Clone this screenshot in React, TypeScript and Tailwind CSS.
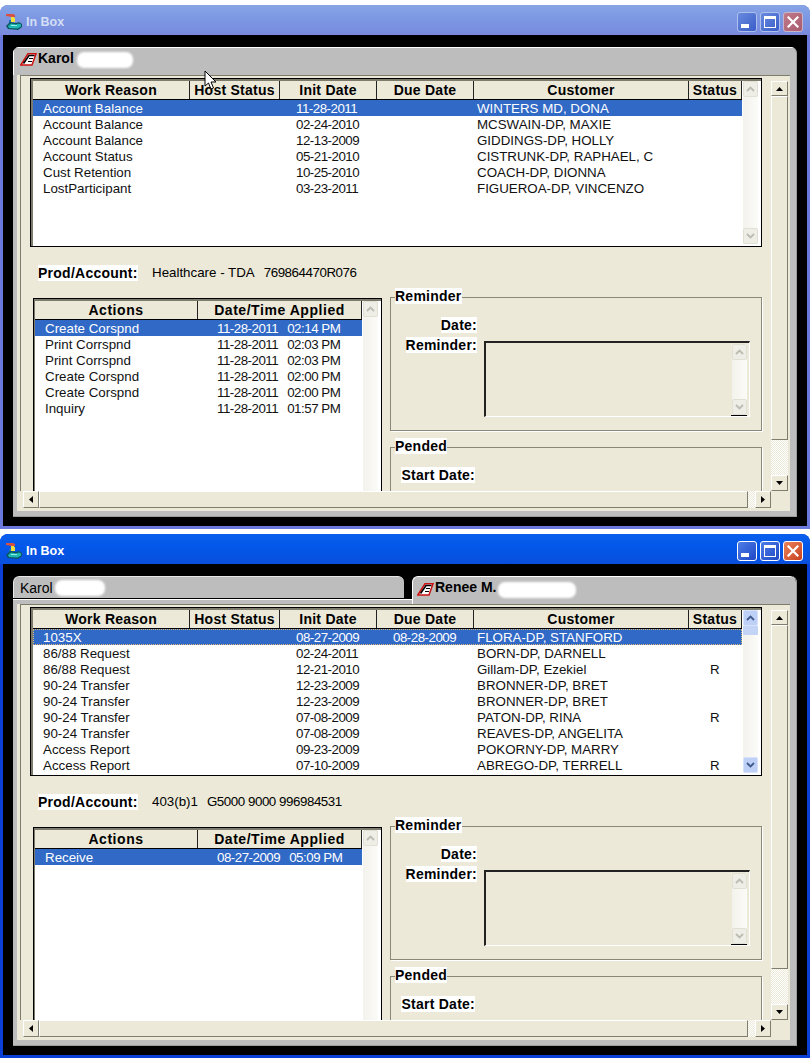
import type { ReactNode } from "react";

type WorkRow = [string, string, string, string, string];
type ActionRow = [string, string, string];

const karolRows: WorkRow[] = [
  ["Account Balance", "11-28-2011", "", "WINTERS MD, DONA", ""],
  ["Account Balance", "02-24-2010", "", "MCSWAIN-DP, MAXIE", ""],
  ["Account Balance", "12-13-2009", "", "GIDDINGS-DP, HOLLY", ""],
  ["Account Status", "05-21-2010", "", "CISTRUNK-DP, RAPHAEL, C", ""],
  ["Cust Retention", "10-25-2010", "", "COACH-DP, DIONNA", ""],
  ["LostParticipant", "03-23-2011", "", "FIGUEROA-DP, VINCENZO", ""],
];

const reneeRows: WorkRow[] = [
  ["1035X", "08-27-2009", "08-28-2009", "FLORA-DP, STANFORD", ""],
  ["86/88 Request", "02-24-2011", "", "BORN-DP, DARNELL", ""],
  ["86/88 Request", "12-21-2010", "", "Gillam-DP, Ezekiel", "R"],
  ["90-24 Transfer", "12-23-2009", "", "BRONNER-DP, BRET", ""],
  ["90-24 Transfer", "12-23-2009", "", "BRONNER-DP, BRET", ""],
  ["90-24 Transfer", "07-08-2009", "", "PATON-DP, RINA", "R"],
  ["90-24 Transfer", "07-08-2009", "", "REAVES-DP, ANGELITA", ""],
  ["Access Report", "09-23-2009", "", "POKORNY-DP, MARRY", ""],
  ["Access Report", "07-10-2009", "", "ABREGO-DP, TERRELL", "R"],
];

const karolActions: ActionRow[] = [
  ["Create Corspnd", "11-28-2011", "02:14 PM"],
  ["Print Corrspnd", "11-28-2011", "02:03 PM"],
  ["Print Corrspnd", "11-28-2011", "02:03 PM"],
  ["Create Corspnd", "11-28-2011", "02:00 PM"],
  ["Create Corspnd", "11-28-2011", "02:00 PM"],
  ["Inquiry", "11-28-2011", "01:57 PM"],
];

const reneeActions: ActionRow[] = [["Receive", "08-27-2009", "05:09 PM"]];

const workHeads = ["Work Reason", "Host Status", "Init Date", "Due Date", "Customer", "Status"];

const AppIcon = () => (
  <svg width="17" height="17" viewBox="0 0 17 17" className="shrink-0">
    <path d="M0 0h7l2 1v2H6L0 2z" fill="#d8503f" />
    <path d="M5 3h3v1h1v4H5z" fill="#f2e23a" />
    <path d="M3 6h2v3H3z" fill="#1c6fb8" />
    <polygon points="0,12 4,8 10,9 13,8 16,10 16,13 12,16 2,15" fill="#0b5560" />
    <polygon points="2,12 5,9.5 10,10.5 13,9.5 15,10.5 15,12.5 11.5,14.5 3,14" fill="#1fb8b4" />
    <rect x="5" y="11" width="6" height="1" fill="#8cf0e8" />
  </svg>
);

const TabIcon = () => (
  <svg width="17" height="13" viewBox="0 0 17 13" className="shrink-0">
    <polygon points="0.8,12 8,0.8 16,0.8 12,12" fill="#fff" stroke="#cc1010" strokeWidth="1.5" />
    <polyline points="3.5,10.5 9,2.5 14.5,2.5" fill="none" stroke="#000" strokeWidth="1.6" />
    <rect x="9" y="5" width="4" height="1" fill="#000" />
    <rect x="8" y="8" width="4" height="1" fill="#000" />
  </svg>
);

const Arrow = ({ dir }: { dir: "up" | "down" | "left" | "right" }) => {
  const points = {
    up: "0,4 3.5,0 7,4",
    down: "0,0 7,0 3.5,4",
    left: "4,0 4,7 0,3.5",
    right: "0,0 4,3.5 0,7",
  }[dir];
  const wide = dir === "up" || dir === "down";
  return (
    <svg width={wide ? 7 : 4} height={wide ? 4 : 7} viewBox={wide ? "0 0 7 4" : "0 0 4 7"}>
      <polygon points={points} fill="#000" />
    </svg>
  );
};

// classic grey scroll button, used by the outer form scrollbars
const ClassicButton = ({ dir, className }: { dir: "up" | "down" | "left" | "right"; className: string }) => (
  <div className={"flex shrink-0 items-center justify-center border border-t-white border-l-white border-r-[#7f7d6c] border-b-[#7f7d6c] bg-[#ece9d8] " + className}>
    <Arrow dir={dir} />
  </div>
);

const XpButton = ({ up, enabled }: { up: boolean; enabled: boolean }) => (
  <div
    className={
      enabled
        ? "flex h-[16px] w-[15px] shrink-0 items-center justify-center rounded-[2px] border border-[#d6e2fb] bg-[#bed0f6]"
        : "flex h-[16px] w-[15px] shrink-0 items-center justify-center rounded-[2px] border border-[#e2e0d4] bg-[#eeede6]"
    }
  >
    <svg width="9" height="6" viewBox="0 0 9 6">
      <polyline
        points={up ? "1,5 4.5,1.5 8,5" : "1,1 4.5,4.5 8,1"}
        fill="none"
        stroke={enabled ? "#3f5a8c" : "#bdbcb2"}
        strokeWidth="1.8"
      />
    </svg>
  </div>
);

const XpScroll = ({ enabled = false, className }: { enabled?: boolean; className: string }) => (
  <div className={"flex w-[15px] shrink-0 flex-col bg-linear-to-r from-[#f3f2ec] to-[#fbfbf8] " + className}>
    <XpButton up enabled={enabled} />
    {enabled && <div className="h-[9px] w-[15px] rounded-[1px] bg-[#c3d4f7]" />}
    <div className="flex-1" />
    <XpButton up={false} enabled={enabled} />
  </div>
);

const Cell = ({ children, className = "" }: { children?: ReactNode; className?: string }) => (
  <div className={"truncate leading-[18px] whitespace-pre " + className}>{children}</div>
);

const WorkTable = ({ rows, enabled, focus }: { rows: WorkRow[]; enabled: boolean; focus: boolean }) => (
  <div className="h-[169px] w-[732px] border border-black">
    <div className="flex h-[167px] border-t-2 border-l-2 border-[#7d7b6b] bg-white">
      <div className="w-[709px]">
        <div className="grid h-[19px] grid-cols-[157px_90px_97px_97px_215px_53px] border-b border-black bg-[#ece9d8]">
          {workHeads.map((head) => (
            <div key={head} className="flex items-center justify-center border-r border-[#222] text-[14px] leading-[18px] font-bold tracking-[0.25px]">
              {head}
            </div>
          ))}
        </div>
        {rows.map((row, i) => (
          <div
            key={i}
            className={
              i === 0
                ? focus
                  ? "grid h-[16px] grid-cols-[157px_90px_97px_97px_215px_53px] bg-[#3169c6] text-white outline-1 -outline-offset-1 outline-dotted outline-[#d9b878]"
                  : "grid h-[16px] grid-cols-[157px_90px_97px_97px_215px_53px] bg-[#3169c6] text-white"
                : "grid h-[16px] grid-cols-[157px_90px_97px_97px_215px_53px] text-[#111]"
            }
          >
            <Cell className="pl-[10px]">{row[0]}</Cell>
            <Cell />
            <Cell className="pl-[16px] tracking-[-0.5px]">{row[1]}</Cell>
            <Cell className="pl-[16px] tracking-[-0.5px]">{row[2]}</Cell>
            <Cell className="pl-[3px]">{row[3]}</Cell>
            <Cell className="pl-[21px]">{row[4]}</Cell>
          </div>
        ))}
      </div>
      <XpScroll enabled={enabled} className="ml-px h-[163px]" />
    </div>
  </div>
);

const ActionsTable = ({ rows }: { rows: ActionRow[] }) => (
  <div className="h-[220px] w-[349px] shrink-0 border border-black">
    <div className="flex h-full border-t-2 border-l border-[#7d7b6b] bg-white">
      <div className="w-[327px]">
        <div className="grid h-[19px] grid-cols-[163px_164px] border-b border-black bg-[#ece9d8]">
          {["Actions", "Date/Time Applied"].map((head) => (
            <div key={head} className="flex items-center justify-center border-r border-[#222] text-[14px] leading-[18px] font-bold tracking-[0.55px]">
              {head}
            </div>
          ))}
        </div>
        {rows.map((row, i) => (
          <div
            key={i}
            className={
              i === 0
                ? "grid h-[16px] grid-cols-[163px_164px] bg-[#3169c6] text-white"
                : "grid h-[16px] grid-cols-[163px_164px] text-[#111]"
            }
          >
            <Cell className="pl-[10px]">{row[0]}</Cell>
            <Cell className="pl-[19px] tracking-[-0.5px]">
              {row[1]}
              <span className="ml-[9px]">{row[2]}</span>
            </Cell>
          </div>
        ))}
      </div>
      <XpScroll className="ml-px h-[216px]" />
    </div>
  </div>
);

const Label = ({ children }: { children: ReactNode }) => (
  <span className="inline-block h-[16px] bg-white text-[14px] leading-[16px] font-bold tracking-[0.25px]">{children}</span>
);

const Group = ({ title, className, children }: { title: string; className: string; children: ReactNode }) => (
  <div className={"w-[372px] border border-[#8a8878] shadow-[1px_1px_0_#fff] " + className}>
    <div className="mt-[-10px] ml-[4px] h-[16px] w-fit">
      <Label>{title}</Label>
    </div>
    {children}
  </div>
);

const DetailPane = ({ actions, product, account }: { actions: ActionRow[]; product: string; account: string }) => (
  <>
    <div className="mt-[18px] ml-[8px] flex h-[16px] items-center">
      <div className="w-[114px]">
        <Label>Prod/Account:</Label>
      </div>
      <span className="leading-[18px]">{product}</span>
      <span className="ml-[9px] leading-[18px] tracking-[-0.45px]">{account}</span>
    </div>
    <div className="mt-[17px] ml-[3px] flex items-start gap-[8px]">
      <ActionsTable rows={actions} />
      <div className="-mt-px flex flex-col gap-[16px]">
        <Group title="Reminder" className="h-[134px]">
          <div className="mt-[13px] w-[86px] text-right">
            <Label>Date:</Label>
          </div>
          <div className="mt-[3px] flex items-start gap-[7px]">
            <div className="w-[86px] text-right">
              <Label>Reminder:</Label>
            </div>
            <div className="mt-[4px] flex h-[76px] w-[266px] justify-end border-t-2 border-l-2 border-r border-b border-t-[#222] border-l-[#222] border-r-white border-b-white pr-[2px]">
              <div className="h-[73px] border-b border-black pt-px pl-px">
                <XpScroll className="h-[71px]" />
              </div>
            </div>
          </div>
        </Group>
        <Group title="Pended" className="h-[100px]">
          <div className="mt-[13px] w-[84px] text-right">
            <Label>Start Date:</Label>
          </div>
        </Group>
      </div>
    </div>
  </>
);

const TitleButtons = ({ active }: { active: boolean }) => (
  <div className="mr-[7px] ml-auto flex gap-[3px] pb-[1px]">
    <div
      className={
        active
          ? "flex h-[20px] w-[20px] items-end rounded-[3px] border border-white bg-linear-to-br from-[#4f7ee8] to-[#1f46c4] pb-[3px] pl-[3px]"
          : "flex h-[20px] w-[20px] items-end rounded-[3px] border border-[#aebfec] bg-linear-to-br from-[#6a8ade] to-[#3a5cc8] pb-[3px] pl-[3px]"
      }
    >
      <div className="h-[4px] w-[8px] bg-white" />
    </div>
    <div
      className={
        active
          ? "flex h-[20px] w-[20px] items-center justify-center rounded-[3px] border border-white bg-linear-to-br from-[#4f7ee8] to-[#1f46c4]"
          : "flex h-[20px] w-[20px] items-center justify-center rounded-[3px] border border-[#aebfec] bg-linear-to-br from-[#6a8ade] to-[#3a5cc8]"
      }
    >
      <div className="h-[12px] w-[12px] border border-t-[3px] border-white" />
    </div>
    <div
      className={
        active
          ? "flex h-[20px] w-[20px] items-center justify-center rounded-[3px] border border-white bg-linear-to-br from-[#e8825a] to-[#c8401c]"
          : "flex h-[20px] w-[20px] items-center justify-center rounded-[3px] border border-[#c8b4c8] bg-linear-to-br from-[#c07a88] to-[#a85c70]"
      }
    >
      <svg width="12" height="12" viewBox="0 0 12 12">
        <path d="M1.5 1.5l9 9M10.5 1.5l-9 9" stroke="#fff" strokeWidth="2.2" strokeLinecap="square" />
      </svg>
    </div>
  </div>
);

const Redaction = ({ className }: { className: string }) => (
  <div className={"h-[16px] rounded-[7px] bg-white blur-[1px] " + className} />
);

const Window = ({ active, tabs, children }: { active: boolean; tabs: ReactNode; children: ReactNode }) => (
  <div
    className={
      active
        ? "relative h-[524px] rounded-t-[8px] bg-[#0a3fd8]"
        : "relative h-[524px] rounded-t-[8px] bg-[#6b78dc]"
    }
  >
    <div
      className={
        active
          ? "flex h-[30px] items-center rounded-t-[8px] bg-linear-to-b from-[#0a5fee] via-[#0356e8] to-[#0a4fdc] pt-[4px] pl-[6px]"
          : "flex h-[30px] items-center rounded-t-[8px] bg-linear-to-b from-[#87a4e6] via-[#7b96e2] to-[#7a8ade] pt-[4px] pl-[6px]"
      }
    >
      <AppIcon />
      <span
        className={
          active
            ? "ml-[3px] text-[12.5px] font-bold text-white"
            : "ml-[3px] text-[12.5px] font-bold text-[#d4def5]"
        }
      >
        In Box
      </span>
      <TitleButtons active={active} />
    </div>
    <div className="mx-[3px] h-[491px] bg-black px-[10px] pt-[12px]">
      <div className="h-[470px] overflow-hidden rounded-t-[6px] border-r border-b border-[#9c9c9c] bg-[#bdbdbd]">
        {tabs}
        <div className="mr-[6px] ml-[4px] h-[436px] bg-[#ece9d8]">
          <div className="ml-[3px] flex h-[416px] border-t border-l border-[#7d7b6b]">
            <div className="h-[415px] w-[750px] overflow-hidden pt-[2px] pl-[9px]">{children}</div>
            <div className="flex h-[415px] w-[17px] flex-col pt-[5px]">
              <ClassicButton dir="up" className="h-[15px]" />
              <div className="h-[344px] shrink-0 border border-t-white border-l-white border-r-[#7f7d6c] border-b-[#7f7d6c] bg-[#ece9d8]" />
              <div className="flex-1 bg-[repeating-conic-gradient(#ece9d8_0_25%,#fff_0_50%)] bg-[length:2px_2px]" />
              <ClassicButton dir="down" className="h-[16px]" />
            </div>
          </div>
          <div className="ml-[6px] flex h-[17px]">
            <ClassicButton dir="left" className="w-[16px]" />
            <div className="w-[709px] shrink-0 border border-t-white border-l-white border-r-[#7f7d6c] border-b-[#7f7d6c] bg-[#ece9d8]" />
            <div className="w-[7px] shrink-0 bg-[repeating-conic-gradient(#ece9d8_0_25%,#fff_0_50%)] bg-[length:2px_2px]" />
            <ClassicButton dir="right" className="w-[16px]" />
          </div>
        </div>
      </div>
    </div>
  </div>
);

const KarolTabs = () => (
  <div className="flex h-[28px] items-start border-t border-l border-white pt-[4px] pl-[6px] text-[14px] leading-[16px] font-bold">
    <div className="mt-[1px]">
      <TabIcon />
    </div>
    <span className="ml-[1px] -mt-[2px]">Karol</span>
    <Redaction className="ml-[3px] w-[56px]" />
  </div>
);

const ReneeTabs = () => (
  <div className="flex h-[28px] bg-black">
    <div className="flex w-[399px] shrink-0 flex-col">
      <div className="h-[23px] border-b border-black">
        <div className="flex h-[22px] w-[391px] items-center rounded-t-[6px] border-t border-l border-[#e8e8e8] bg-[#bdbdbd] pl-[6px] text-[14px]">
          <span>Karol</span>
          <Redaction className="ml-[2px] w-[50px]" />
        </div>
      </div>
      <div className="flex-1 border-t border-white bg-[#bdbdbd]" />
    </div>
    <div className="flex flex-1 items-start rounded-t-[6px] border-t border-l border-white bg-[#bdbdbd] pt-[5px] pl-[4px] text-[14px] leading-[16px] font-bold">
      <div className="mt-[1px]">
        <TabIcon />
      </div>
      <span className="ml-[1px] -mt-[3px]">Renee M.</span>
      <Redaction className="ml-[2px] w-[78px]" />
    </div>
  </div>
);

export default function App() {
  return (
    <div className="h-[1058px] w-[810px] overflow-hidden bg-white pt-[5px] font-['Liberation_Sans',Arial,sans-serif] text-[13.33px] leading-[16px] text-black">
      <Window active={false} tabs={<KarolTabs />}>
        <WorkTable rows={karolRows} enabled={false} focus={false} />
        <DetailPane actions={karolActions} product="Healthcare - TDA" account="769864470R076" />
      </Window>
      <div className="h-[5px]" />
      <Window active tabs={<ReneeTabs />}>
        <WorkTable rows={reneeRows} enabled focus />
        <DetailPane actions={reneeActions} product="403(b)1" account="G5000 9000 996984531" />
      </Window>
      {/* mouse pointer caught in the first window */}
      <svg width="14" height="21" viewBox="0 0 14 21" className="absolute top-[70px] left-[204px]">
        <polygon points="1,1 1,16 4.5,13 7,19 9.5,18 7,12 12,12" fill="#fff" stroke="#000" strokeWidth="1" />
      </svg>
    </div>
  );
}
